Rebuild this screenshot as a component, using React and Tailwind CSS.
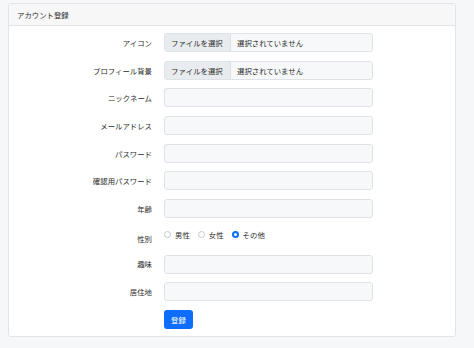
import React from 'react';

const font = { fontFamily: '"Noto Sans CJK JP", "Noto Sans", sans-serif' };

const fields = [
  { label: 'アイコン', type: 'file' },
  { label: 'プロフィール背景', type: 'file' },
  { label: 'ニックネーム', type: 'text' },
  { label: 'メールアドレス', type: 'text' },
  { label: 'パスワード', type: 'text' },
  { label: '確認用パスワード', type: 'text' },
  { label: '年齢', type: 'text' },
  { label: '性別', type: 'radio' },
  { label: '趣味', type: 'text' },
  { label: '居住地', type: 'text' },
];

const Radio = ({ checked, label }) => (
  <label className="flex items-center gap-[4px]">
    {checked ? (
      <span className="w-[7px] h-[7px] rounded-full bg-[#0d6efd] flex items-center justify-center">
        <span className="w-[3px] h-[3px] rounded-full bg-white" />
      </span>
    ) : (
      <span className="w-[7px] h-[7px] rounded-full border border-[#c4c8cc] bg-white" />
    )}
    <span>{label}</span>
  </label>
);

const Field = ({ type }) => {
  if (type === 'file') {
    return (
      <div className="flex h-[19px] w-[209px] rounded-[3px] border border-[#dee2e6] bg-[#f6f8fa] overflow-hidden whitespace-nowrap">
        <span className="flex items-center shrink-0 px-[6px] w-[66px] bg-[#e9ecef] border-r border-[#dee2e6]">ファイルを選択</span>
        <span className="flex items-center px-[6px]">選択されていません</span>
      </div>
    );
  }
  if (type === 'radio') {
    return (
      <div className="h-[19px] flex items-start pt-[2px] gap-[8px]">
        <Radio label="男性" />
        <Radio label="女性" />
        <Radio checked label="その他" />
      </div>
    );
  }
  return <div className="h-[19px] w-[209px] rounded-[3px] border border-[#dee2e6] bg-[#f6f8fa]" />;
};

export default function App() {
  return (
    <div className="min-h-[348px] bg-[#f6f7f9] pt-[3px] pl-[8px] pr-[18px] text-[7.4px] text-[#2b2b2b]" style={font}>
      <div className="bg-white border border-[#e2e4e7] rounded-[3px]">
        <div className="h-[22px] flex items-center px-[8px] bg-[#f7f7f7] border-b border-[#e2e4e7]">アカウント登録</div>
        <div className="pt-[7px] pb-[7px] flex flex-col gap-[8.7px]">
          {fields.map((f) => (
            <div key={f.label} className="grid grid-cols-[143px_1fr] gap-[12px]">
              <div className={`flex justify-end h-[19px] ${f.type === 'radio' ? 'items-end pb-[2px]' : 'items-center'}`}>{f.label}</div>
              <Field type={f.type} />
            </div>
          ))}
          <div className="grid grid-cols-[143px_1fr] gap-[12px]">
            <div />
            <button className="h-[19px] w-[29px] rounded-[3px] bg-[#0d6efd] text-white">登録</button>
          </div>
        </div>
      </div>
    </div>
  );
}
